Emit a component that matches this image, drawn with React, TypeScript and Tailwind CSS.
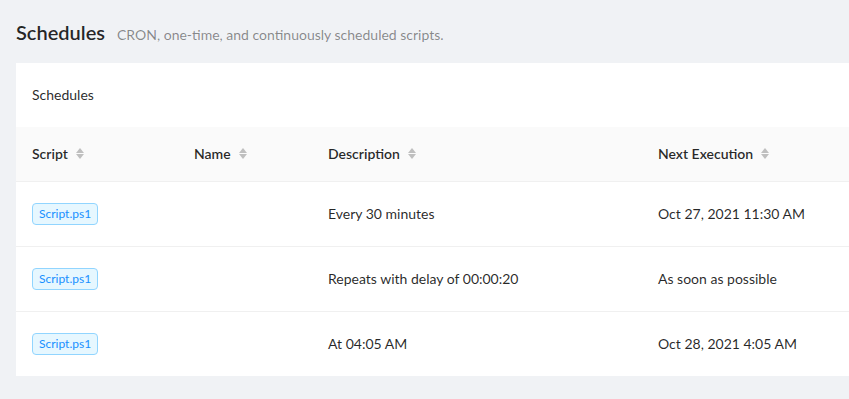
import React from 'react';

interface Schedule {
  script: string;
  name: string;
  description: string;
  next: string;
}

const schedules: Schedule[] = [
  { script: 'Script.ps1', name: '', description: 'Every 30 minutes', next: 'Oct 27, 2021 11:30 AM' },
  { script: 'Script.ps1', name: '', description: 'Repeats with delay of 00:00:20', next: 'As soon as possible' },
  { script: 'Script.ps1', name: '', description: 'At 04:05 AM', next: 'Oct 28, 2021 4:05 AM' },
];

const columns = [
  { title: 'Script', width: 'w-[162px]' },
  { title: 'Name', width: 'w-[134px]' },
  { title: 'Description', width: 'w-[330px]' },
  { title: 'Next Execution', width: '' },
];

function SortIcon() {
  return (
    <span className="ml-2 inline-flex flex-col items-center gap-[1px] text-[#bfbfbf]">
      <svg width="8" height="5" viewBox="0 0 8 5" fill="currentColor">
        <path d="M4 0 L8 5 L0 5 Z" />
      </svg>
      <svg width="8" height="5" viewBox="0 0 8 5" fill="currentColor">
        <path d="M0 0 L8 0 L4 5 Z" />
      </svg>
    </span>
  );
}

export default function App() {
  return (
    <div
      className="min-h-screen w-full overflow-hidden bg-[#f0f2f5] text-[rgba(0,0,0,0.85)]"
      style={{ fontFamily: 'Lato, "Open Sans", sans-serif' }}
    >
      <div className="flex items-baseline gap-3 px-4 pt-[18px] pb-[17px]">
        <h1 className="text-[20px] leading-7 font-semibold">Schedules</h1>
        <span className="text-sm text-[rgba(0,0,0,0.45)]">CRON, one-time, and continuously scheduled scripts.</span>
      </div>

      <div className="ml-4 w-[1000px] bg-white">
        <div className="flex h-16 items-center px-4 text-sm">Schedules</div>
        <table className="w-full table-fixed border-collapse text-sm">
          <thead>
            <tr className="h-[54px] bg-[#fafafa] border-b border-[#f0f0f0]">
              {columns.map((c) => (
                <th key={c.title} className={`${c.width} px-4 text-left font-semibold`}>
                  <span className="inline-flex items-center">
                    {c.title}
                    <SortIcon />
                  </span>
                </th>
              ))}
            </tr>
          </thead>
          <tbody>
            {schedules.map((s, i) => (
              <tr key={i} className={`h-[65px] ${i < schedules.length - 1 ? 'border-b border-[#f0f0f0]' : ''}`}>
                <td className="px-4">
                  <span className="inline-block rounded-sm border border-[#91d5ff] bg-[#e6f7ff] px-[6px] text-xs leading-5 text-[#1890ff]">
                    {s.script}
                  </span>
                </td>
                <td className="px-4">{s.name}</td>
                <td className="px-4">{s.description}</td>
                <td className="px-4">{s.next}</td>
              </tr>
            ))}
          </tbody>
        </table>
      </div>
    </div>
  );
}
